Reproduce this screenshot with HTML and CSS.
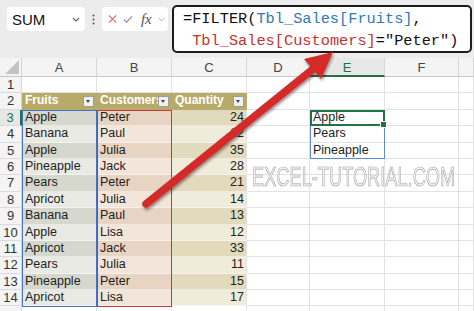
FILE: index.html
```html
<!DOCTYPE html>
<html lang="en">
<head>
    <meta charset="UTF-8">
    <meta name="viewport" content="width=device-width, initial-scale=1.0">
    <title>FILTER by customer</title>
    <link rel="stylesheet" href="styles.css">
</head>
<body>
    <div class="toolbar">
        <div class="namebox">
            <span class="name">SUM</span>
            <svg class="chev" width="8" height="5" viewBox="0 0 8 5"><path d="M1 1 L4 4 L7 1" fill="none" stroke="#666" stroke-width="1.2"/></svg>
        </div>
        <div class="dots">
            <svg width="3" height="11" viewBox="0 0 3 11"><circle cx="1.5" cy="1.5" r="1" fill="#555"/><circle cx="1.5" cy="5.5" r="1" fill="#555"/><circle cx="1.5" cy="9.5" r="1" fill="#555"/></svg>
        </div>
        <div class="fxbox">
            <svg width="10" height="10" viewBox="0 0 10 10"><path d="M1 1 L9 9 M9 1 L1 9" stroke="#df6b6b" stroke-width="1.3"/></svg>
            <svg width="11" height="9" viewBox="0 0 11 9"><path d="M1 4.5 L4 7.5 L10 1" fill="none" stroke="#8f8f8f" stroke-width="1.2"/></svg>
            <span class="fx">fx</span>
            <svg width="8" height="5" viewBox="0 0 8 5"><path d="M1 1 L4 4 L7 1" fill="none" stroke="#aaa" stroke-width="1.1"/></svg>
        </div>
        <div class="formula">
            <div>=FILTER(<span class="f-blue">Tbl_Sales[Fruits]</span>,</div>
            <div>&nbsp;<span class="f-red">Tbl_Sales[Customers]</span>="Peter")</div>
        </div>
    </div>

    <div class="sheet">
        <div class="row colhead">
            <div class="corner"><svg width="14" height="14" viewBox="0 0 14 14"><path d="M14 0 L14 14 L0 14 Z" fill="#c4c4c4"/></svg></div>
            <div>A</div><div>B</div><div>C</div><div>D</div><div class="sel">E</div><div>F</div><div></div>
        </div>
        <div class="row"><div class="rh">1</div><div></div><div></div><div></div><div></div><div></div><div></div><div></div></div>
        <div class="row">
            <div class="rh">2</div>
            <div class="th"><span>Fruits</span><i class="filter"></i></div>
            <div class="th"><span>Customers</span><i class="filter"></i></div>
            <div class="th"><span>Quantity</span><i class="filter"></i></div>
            <div></div><div></div><div></div><div></div>
        </div>
        <div class="row band"><div class="rh rh-sel">3</div><div class="ca">Apple</div><div class="cb">Peter</div><div class="cc">24</div><div></div><div>Apple</div><div></div><div></div></div>
        <div class="row"><div class="rh">4</div><div class="ca">Banana</div><div class="cb">Paul</div><div class="cc">12</div><div></div><div>Pears</div><div></div><div></div></div>
        <div class="row band"><div class="rh">5</div><div class="ca">Apple</div><div class="cb">Julia</div><div class="cc">35</div><div></div><div>Pineapple</div><div></div><div></div></div>
        <div class="row"><div class="rh">6</div><div class="ca">Pineapple</div><div class="cb">Jack</div><div class="cc">28</div><div></div><div></div><div></div><div></div></div>
        <div class="row band"><div class="rh">7</div><div class="ca">Pears</div><div class="cb">Peter</div><div class="cc">21</div><div></div><div></div><div></div><div></div></div>
        <div class="row"><div class="rh">8</div><div class="ca">Apricot</div><div class="cb">Julia</div><div class="cc">14</div><div></div><div></div><div></div><div></div></div>
        <div class="row band"><div class="rh">9</div><div class="ca">Banana</div><div class="cb">Paul</div><div class="cc">13</div><div></div><div></div><div></div><div></div></div>
        <div class="row"><div class="rh">10</div><div class="ca">Apple</div><div class="cb">Lisa</div><div class="cc">12</div><div></div><div></div><div></div><div></div></div>
        <div class="row band"><div class="rh">11</div><div class="ca">Apricot</div><div class="cb">Jack</div><div class="cc">33</div><div></div><div></div><div></div><div></div></div>
        <div class="row"><div class="rh">12</div><div class="ca">Pears</div><div class="cb">Julia</div><div class="cc">11</div><div></div><div></div><div></div><div></div></div>
        <div class="row band"><div class="rh">13</div><div class="ca">Pineapple</div><div class="cb">Peter</div><div class="cc">15</div><div></div><div></div><div></div><div></div></div>
        <div class="row"><div class="rh">14</div><div class="ca">Apricot</div><div class="cb">Lisa</div><div class="cc">17</div><div></div><div></div><div></div><div></div></div>
        <div class="row"><div class="rh"></div><div></div><div></div><div></div><div></div><div></div><div></div><div></div></div>

        <!-- range highlights drawn over the grid -->
        <div class="range range-blue"></div>
        <div class="range range-red"></div>
        <div class="range range-spill"></div>
        <div class="range range-active"><i class="handle"></i></div>
    </div>

    <div class="watermark">EXCEL-TUTORIAL.COM</div>

    <svg class="arrow" width="474" height="311" viewBox="0 0 474 311">
        <defs>
            <filter id="shade" x="-20%" y="-20%" width="140%" height="140%">
                <feDropShadow dx="1" dy="2" stdDeviation="1.4" flood-color="#000" flood-opacity="0.45"/>
            </filter>
        </defs>
        <g filter="url(#shade)">
            <line x1="146" y1="204" x2="318" y2="65" stroke="#d52a2b" stroke-width="7.5" stroke-linecap="round"/>
            <polygon points="333,52 304,59 321,79" fill="#d52a2b"/>
        </g>
    </svg>
</body>
</html>
```

FILE: styles.css
```css
body {
    margin: 0;
    width: 474px;
    height: 311px;
    overflow: hidden;
    position: relative;
    background-color: white;
    font-family: 'Liberation Sans', Arial, sans-serif;
    color: #222;
}

/* formula bar */
.toolbar {
    height: 58px;
    box-sizing: border-box;
    background-color: #ececec;
    display: flex;
    align-items: flex-start;
    padding: 5px 0 0 7px;
}

.namebox {
    width: 78px;
    height: 24px;
    margin-top: 2px;
    background-color: white;
    border-radius: 4px;
    display: flex;
    align-items: center;
    justify-content: space-between;
    box-sizing: border-box;
    padding: 0 5px 0 5px;
}

.name {
    font-size: 15px;
    color: #111;
}

.dots {
    width: 17px;
    height: 24px;
    margin-top: 2px;
    display: flex;
    align-items: center;
    justify-content: center;
}

.fxbox {
    width: 66px;
    height: 24px;
    margin-top: 2px;
    background-color: white;
    border-radius: 4px;
    display: flex;
    align-items: center;
    gap: 6px;
    box-sizing: border-box;
    padding: 0 3px 0 6px;
}

.fx {
    font-family: 'Liberation Serif', serif;
    font-style: italic;
    font-size: 15px;
    color: #555;
    margin-left: 2px;
}

.formula {
    width: 300px;
    height: 48px;
    margin-left: 4px;
    box-sizing: border-box;
    background-color: white;
    border: 2px solid #1c1c1c;
    border-radius: 5px;
    padding: 2px 0 0 9px;
    font-family: 'Liberation Mono', 'Courier New', monospace;
    font-size: 15.3px;
    line-height: 21.7px;
    color: #111;
    white-space: nowrap;
    overflow: hidden;
}

.f-blue {
    color: #2e78b9;
}

.f-red {
    color: #c5312f;
}

/* sheet grid */
.sheet {
    position: relative;
}

.row {
    display: grid;
    grid-template-columns: 22px 75px 75px 75px 63px 75px 74px 15px;
    height: 16.4px;
}

.row > div {
    box-sizing: border-box;
    border-right: 1px solid #e2e2e2;
    border-bottom: 1px solid #e2e2e2;
    padding: 0 3px;
    font-size: 12.5px;
    line-height: 15.4px;
    white-space: nowrap;
    overflow: hidden;
}

.colhead {
    height: 19px;
}

.colhead > div {
    background-color: #f4f4f4;
    border-right-color: #d6d6d6;
    border-bottom-color: #c8c8c8;
    text-align: center;
    font-size: 13px;
    line-height: 19px;
    color: #444;
}

.colhead > .sel {
    background-color: #e6e8e6;
    color: #217346;
    border-bottom: 2px solid #217346;
}

.corner {
    position: relative;
}

.corner svg {
    position: absolute;
    right: 2px;
    bottom: 2px;
}

.rh {
    background-color: #f4f4f4;
    text-align: center;
    color: #333;
    border-right-color: #d6d6d6 !important;
    border-bottom-color: #dcdcdc !important;
    padding: 0 !important;
    font-size: 13px !important;
}

.rh-sel {
    background-color: #e6e8e6;
    color: #217346;
    border-right: 2px solid #217346 !important;
}

/* table */
.th {
    background-color: #b8aa68;
    color: white;
    font-weight: bold;
    display: flex;
    align-items: center;
    border-color: #b8aa68 !important;
}

.th span {
    flex: 1;
    min-width: 0;
    overflow: hidden;
    font-size: 12px;
}

.filter {
    width: 9px;
    height: 9px;
    margin-right: -1px;
    flex-shrink: 0;
    background-color: #f1f1f1;
    border: 1px solid #9c9c9c;
    position: relative;
}

.filter::after {
    content: "";
    position: absolute;
    left: 2px;
    top: 3px;
    border-left: 2.5px solid transparent;
    border-right: 2.5px solid transparent;
    border-top: 3px solid #444;
}

.ca { background-color: #e9eae4; }
.cb { background-color: #f3e5da; }
.cc { background-color: #f0ecdc; text-align: right; padding-right: 2px !important; }

.band .ca { background-color: #d6d8cd; }
.band .cb { background-color: #e8d4c3; }
.band .cc { background-color: #e1dabd; }

.ca, .cb, .cc {
    border-bottom-color: rgba(255, 255, 255, 0.45) !important;
}

/* reference and selection outlines */
.range {
    position: absolute;
    box-sizing: border-box;
    pointer-events: none;
}

.range-blue {
    left: 22px;
    top: 51.8px;
    width: 75px;
    height: 196.8px;
    border: 1.5px solid #4472c4;
}

.range-red {
    left: 97px;
    top: 51.8px;
    width: 75px;
    height: 196.8px;
    border: 1.5px solid #c8373f;
}

.range-spill {
    left: 310px;
    top: 51.8px;
    width: 75px;
    height: 49.2px;
    border: 1px solid #5a8ad2;
}

.range-active {
    left: 310px;
    top: 51.8px;
    width: 75px;
    height: 16.4px;
    border: 2px solid #217346;
}

.handle {
    position: absolute;
    right: -4px;
    bottom: -4px;
    width: 5px;
    height: 5px;
    background-color: #217346;
    border: 1px solid white;
}

.watermark {
    position: absolute;
    left: 252px;
    top: 164px;
    font-size: 27px;
    line-height: 27px;
    color: #f6f6f6;
    -webkit-text-stroke: 0.7px #a2a2a2;
    transform: scaleX(0.675);
    transform-origin: left top;
    white-space: nowrap;
}

.arrow {
    position: absolute;
    left: 0;
    top: 0;
    pointer-events: none;
}
```
